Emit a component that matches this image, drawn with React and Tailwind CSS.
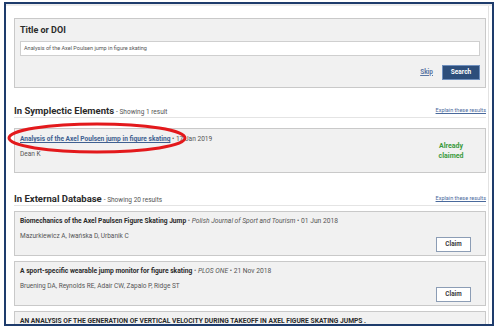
import React from "react";

const results = [
  {
    title: "Biomechanics of the Axel Paulsen Figure Skating Jump",
    journal: "Polish Journal of Sport and Tourism",
    date: "01 Jun 2018",
    authors: "Mazurkiewicz A, Iwańska D, Urbanik C",
  },
  {
    title: "A sport-specific wearable jump monitor for figure skating",
    journal: "PLOS ONE",
    date: "21 Nov 2018",
    authors: "Bruening DA, Reynolds RE, Adair CW, Zapalo P, Ridge ST",
  },
  {
    title:
      "AN ANALYSIS OF THE GENERATION OF VERTICAL VELOCITY DURING TAKEOFF IN AXEL FIGURE SKATING JUMPS .",
    journal: "",
    date: "",
    authors: "",
  },
];

function SectionHeading({ title, count, className }) {
  return (
    <div
      className={`h-[13px] flex items-center justify-between border-b border-[#e4e4e4] ${className}`}
    >
      <div className="flex items-baseline">
        <span className="text-[9.5px] font-bold text-[#2b2b2b] leading-none">
          {title}
        </span>
        <span className="text-[6.5px] text-[#555] ml-[2px] leading-none">
          - {count}
        </span>
      </div>
      <a className="text-[5.5px] text-[#4a6a9c] underline leading-none">
        Explain these results
      </a>
    </div>
  );
}

function ResultCard({ item }) {
  return (
    <div className="mt-[5px] h-[45px] bg-[#f1f1f1] border border-[#c9c9c9] flex justify-between px-[5px]">
      <div className="pt-[5px] flex flex-col">
        <div className="text-[6.7px] leading-[8px] text-[#2b2b2b] whitespace-nowrap">
          <span className="font-bold">{item.title}</span>
          {item.journal && (
            <>
              <span className="text-[#777]"> • </span>
              <span className="italic text-[#555]">{item.journal}</span>
              <span className="text-[#555]"> • {item.date}</span>
            </>
          )}
        </div>
        <div className="mt-[7px] text-[6.5px] leading-[8px] text-[#555]">
          {item.authors}
        </div>
      </div>
      {item.journal && (
        <div className="pt-[17px] pr-[9px]">
          <button className="w-[35px] h-[15px] bg-white border border-[#8c9db5] text-[6.3px] font-bold text-[#3a3a3a]">
            Claim
          </button>
        </div>
      )}
    </div>
  );
}

export default function App() {
  return (
    <div
      className="w-[498px] h-[328px] bg-white relative pt-[2px] pl-[4px]"
      style={{ fontFamily: "Roboto, 'Liberation Sans', sans-serif" }}
    >
      <div className="w-[490px] h-[324px] border-2 border-[#1e3c6c] overflow-hidden">
        <div className="h-[2px] bg-[#ececec]" />
        <div className="w-[483px] h-[320px] border-r border-[#e2e2e2] pl-[8px] pr-[2px] pt-[12px]">
          {/* search panel */}
          <div className="h-[70px] bg-[#f1f1f1] border border-[#c9c9c9] px-[5px] pt-[5px]">
            <div className="text-[9px] font-bold text-[#2b2b2b] leading-[12px]">
              Title or DOI
            </div>
            <div className="mt-[5px] h-[15px] bg-white border border-[#cfcfcf] flex items-center px-[3px] text-[5.5px] text-[#555]">
              Analysis of the Axel Poulsen jump in figure skating
            </div>
            <div className="mt-[9px] flex items-center justify-end">
              <a className="text-[6.5px] font-bold text-[#5a76a4] underline mr-[9px]">
                Skip
              </a>
              <button className="w-[38px] h-[15px] bg-[#2d4e7b] border border-[#6f8fbd] text-white text-[6.5px] font-bold">
                Search
              </button>
            </div>
          </div>

          <SectionHeading
            title="In Symplectic Elements"
            count="Showing 1 result"
            className="mt-[17px]"
          />

          <div className="mt-[10px] h-[45px] bg-[#f1f1f1] border border-[#c9c9c9] flex justify-between items-center px-[5px]">
            <div className="flex flex-col self-start pt-[6px]">
              <div className="text-[6.6px] leading-[8px] whitespace-nowrap">
                <a className="font-bold text-[#3f5f90] underline">
                  Analysis of the Axel Poulsen jump in figure skating
                </a>
                <span className="text-[#555]"> • 17 Jan 2019</span>
              </div>
              <div className="mt-[7px] text-[6.5px] leading-[8px] text-[#555]">
                Dean K
              </div>
            </div>
            <div className="w-[50px] mr-[4px] text-center text-[7px] font-bold text-[#3a9a3c] leading-[10px]">
              Already
              <br />
              claimed
            </div>
          </div>

          <SectionHeading
            title="In External Database"
            count="Showing 20 results"
            className="mt-[20px]"
          />
          <div className="mt-[3px]">
            {results.map((item, i) => (
              <ResultCard key={i} item={item} />
            ))}
          </div>
        </div>
      </div>

      {/* red highlight */}
      <svg
        className="absolute left-[6px] top-[120px]"
        width="184"
        height="36"
        viewBox="0 0 184 36"
      >
        <ellipse
          cx="91"
          cy="18"
          rx="88"
          ry="14"
          fill="none"
          stroke="#e3191c"
          strokeWidth="3"
        />
      </svg>
    </div>
  );
}
